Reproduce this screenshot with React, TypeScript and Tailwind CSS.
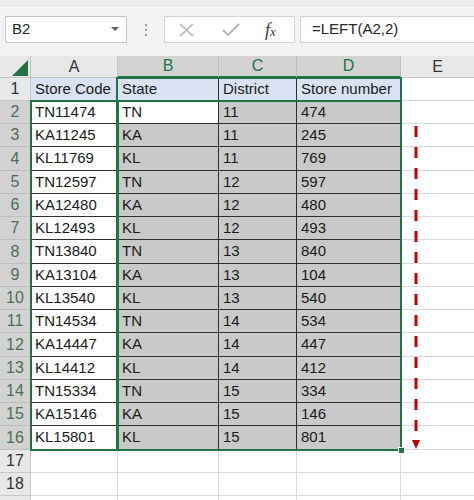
import React from 'react';

const rows = [
  ['TN11474', 'TN', '11', '474'],
  ['KA11245', 'KA', '11', '245'],
  ['KL11769', 'KL', '11', '769'],
  ['TN12597', 'TN', '12', '597'],
  ['KA12480', 'KA', '12', '480'],
  ['KL12493', 'KL', '12', '493'],
  ['TN13840', 'TN', '13', '840'],
  ['KA13104', 'KA', '13', '104'],
  ['KL13540', 'KL', '13', '540'],
  ['TN14534', 'TN', '14', '534'],
  ['KA14447', 'KA', '14', '447'],
  ['KL14412', 'KL', '14', '412'],
  ['TN15334', 'TN', '15', '334'],
  ['KA15146', 'KA', '15', '146'],
  ['KL15801', 'KL', '15', '801'],
];

const colW = ['w-[87px]', 'w-[101px]', 'w-[78px]', 'w-[104px]'];

function rowH(n: number) {
  return n % 4 === 0 ? 'h-[24px]' : 'h-[23px]';
}

function FormulaBar() {
  return (
    <div className="h-[56px] bg-[#f3f3f3] flex flex-col">
      <div className="h-[8px] bg-[#ececec] border-b border-[#f8f8f8]" />
      <div className="flex items-center h-[27px] mt-[8px]">
        <div className="ml-[5px] w-[122px] h-full bg-white border border-[#c6c6c6] flex items-center justify-between pl-[6px] pr-[7px]">
          <span className="text-[15px] text-[#262626]">B2</span>
          <svg width="8" height="5" viewBox="0 0 8 5">
            <polygon points="0,0 8,0 4,4" fill="#606060" />
          </svg>
        </div>
        <div className="w-[37px] flex flex-col items-center gap-[3px]">
          <div className="w-[2px] h-[2px] bg-[#9b9b9b]" />
          <div className="w-[2px] h-[2px] bg-[#9b9b9b]" />
          <div className="w-[2px] h-[2px] bg-[#9b9b9b]" />
        </div>
        <div className="w-[131px] h-full bg-white border border-[#d4d4d4] flex items-center">
          <svg width="16" height="14" viewBox="0 0 16 14" className="ml-[14px]">
            <path d="M1 1 L14 13 M14 1 L1 13" stroke="#b4b4b4" strokeWidth="1.6" fill="none" />
          </svg>
          <svg width="18" height="14" viewBox="0 0 18 14" className="ml-[27px]">
            <path d="M1 7 L6 12 L17 1" stroke="#b4b4b4" strokeWidth="1.8" fill="none" />
          </svg>
          <span className="ml-[25px] font-['Liberation_Serif',serif] italic text-[18px] text-[#3a3a3a] leading-none">
            f<span className="text-[13px]">x</span>
          </span>
        </div>
        <div className="ml-[5px] flex-1 h-full bg-white border border-[#d4d4d4] border-r-0 flex items-center pl-[11px]">
          <span className="text-[15px] text-[#262626]">=LEFT(A2,2)</span>
        </div>
      </div>
    </div>
  );
}

function HeaderRow() {
  const cols = ['A', 'B', 'C', 'D'];
  return (
    <div className="flex h-[22px]">
      <div className="w-[31px] shrink-0 bg-[#e8e8e8] border-r border-b border-[#c4c4c4] relative">
        <svg width="31" height="22" viewBox="0 0 31 22" className="absolute left-0 top-0">
          <polygon points="28,4 28,20 12,20" fill="#217346" />
        </svg>
      </div>
      {cols.map((c, i) => {
        const sel = i > 0;
        return (
          <div
            key={c}
            className={
              colW[i] +
              ' shrink-0 flex items-center justify-center text-[16px] border-r ' +
              (sel
                ? 'bg-[#d2d2d2] text-[#217346] border-[#bdbdbd] border-b-2 border-b-[#217346]'
                : 'bg-[#e8e8e8] text-[#333] border-[#c4c4c4] border-b')
            }
          >
            {c}
          </div>
        );
      })}
      <div className="w-[74px] shrink-0 flex items-center justify-center text-[16px] bg-[#e8e8e8] text-[#333] border-r border-b border-[#c4c4c4]">
        E
      </div>
      <div className="flex-1 bg-[#e8e8e8] border-b border-[#c4c4c4]" />
    </div>
  );
}

function RowHeader({ n, sel, hide }: { n: number; sel: boolean; hide?: boolean }) {
  return (
    <div
      className={
        'w-[31px] shrink-0 flex items-center justify-center text-[16px] border-r border-b ' +
        (sel ? 'bg-[#d2d2d2] text-[#4d6e57] border-[#bdbdbd]' : 'bg-[#e8e8e8] text-[#333] border-[#c8c8c8]')
      }
    >
      {hide ? null : n}
    </div>
  );
}

function DataRow({ n, cells, first }: { n: number; cells: string[]; first?: boolean }) {
  return (
    <div className={'flex ' + rowH(n)}>
      <RowHeader n={n} sel={!first} />
      {cells.map((v, i) => {
        let bg = 'bg-white';
        if (first) bg = 'bg-[#dae3f3]';
        else if (i > 0 && !(n === 2 && i === 1)) bg = 'bg-[#c9c9c9]';
        return (
          <div
            key={i}
            className={
              colW[i] +
              ' shrink-0 flex items-center pl-[4px] text-[15px] text-[#1a1a1a] border-r border-b border-[#2e2e2e] whitespace-nowrap overflow-hidden ' +
              bg
            }
          >
            {v}
          </div>
        );
      })}
      <div className="w-[74px] shrink-0 bg-white border-r border-b border-[#dadada]" />
      <div className="flex-1 bg-white border-b border-[#dadada]" />
    </div>
  );
}

function EmptyRow({ n, hide }: { n: number; hide?: boolean }) {
  return (
    <div className={'flex ' + rowH(n)}>
      <RowHeader n={n} sel={false} hide={hide} />
      {colW.map((w, i) => (
        <div key={i} className={w + ' shrink-0 bg-white border-r border-b border-[#dadada]'} />
      ))}
      <div className="w-[74px] shrink-0 bg-white border-r border-b border-[#dadada]" />
      <div className="flex-1 bg-white border-b border-[#dadada]" />
    </div>
  );
}

export default function App() {
  return (
    <div className="w-[474px] h-[500px] overflow-hidden bg-white font-['Liberation_Sans',Arial,sans-serif]">
      <FormulaBar />
      <div className="relative">
        <HeaderRow />
        <DataRow n={1} cells={['Store Code', 'State', 'District', 'Store number']} first />
        {rows.map((r, i) => (
          <DataRow key={i} n={i + 2} cells={r} />
        ))}
        <EmptyRow n={17} />
        <EmptyRow n={18} />
        <EmptyRow n={19} hide />

        {/* selection outlines */}
        <div className="absolute left-[116px] top-[21px] w-[286px] h-[25px] border-2 border-[#217346] pointer-events-none" />
        <div className="absolute left-[30px] top-[44px] w-[89px] h-[351px] border-2 border-[#217346] pointer-events-none" />
        <div className="absolute left-[116px] top-[44px] w-[286px] h-[351px] border-2 border-[#217346] pointer-events-none" />
        <div className="absolute left-[398px] top-[391px] w-[7px] h-[7px] bg-[#217346] border border-white" />

        {/* red dashed arrow */}
        <svg width="16" height="400" viewBox="0 0 16 400" className="absolute left-[408px] top-0 pointer-events-none">
          <line x1="8" y1="70" x2="8" y2="386" stroke="#c00000" strokeWidth="3" strokeDasharray="11 10" />
          <polygon points="4,384 12,384 8,393" fill="#c00000" />
        </svg>
      </div>
    </div>
  );
}
